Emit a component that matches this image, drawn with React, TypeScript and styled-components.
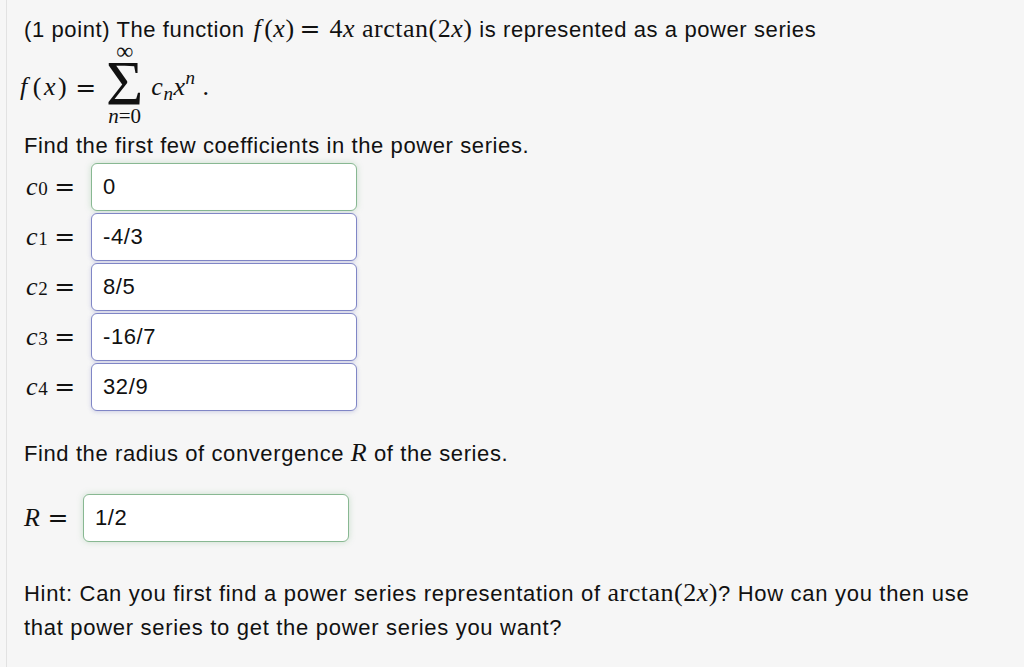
import React from "react";
import styled, { createGlobalStyle } from "styled-components";

const GlobalStyle = createGlobalStyle`
  html, body {
    margin: 0;
    padding: 0;
    background: #f6f6f6;
  }
`;

type Coefficient = {
  index: number;
  value: string;
  state: "correct" | "pending";
};

const coefficients: Coefficient[] = [
  { index: 0, value: "0", state: "correct" },
  { index: 1, value: "-4/3", state: "pending" },
  { index: 2, value: "8/5", state: "pending" },
  { index: 3, value: "-16/7", state: "pending" },
  { index: 4, value: "32/9", state: "pending" },
];

export default function App() {
  return (
    <>
      <GlobalStyle />
      <Page>
        <Line>
          (1 point) The function{" "}
          <MathSpan>
            <F>f</F>(<M>x</M>)<Eq>=</Eq>4<M>x</M> arctan(2<M>x</M>)
          </MathSpan>{" "}
          is represented as a power series
        </Line>

        <SeriesLine>
          <WideMath>
            <F>f</F>(<M>x</M>)
          </WideMath>
          <SeriesEq>=</SeriesEq>
          <Sum>
            <Limit>{"\u221E"}</Limit>
            <Sigma>{"\u03A3"}</Sigma>
            <Lower>
              <M>n</M>=0
            </Lower>
          </Sum>
          <MathSpan>
            <M>c</M>
            <Sub>
              <M>n</M>
            </Sub>
            <M>x</M>
            <Sup>
              <M>n</M>
            </Sup>
            <Dot>.</Dot>
          </MathSpan>
        </SeriesLine>

        <FindLine>Find the first few coefficients in the power series.</FindLine>

        <Answers>
          {coefficients.map((c) => (
            <AnswerRow key={c.index}>
              <Label>
                <M>c</M>
                <Sub>{c.index}</Sub>
                <LabelEq>=</LabelEq>
              </Label>
              <Field $state={c.state}>{c.value}</Field>
            </AnswerRow>
          ))}
        </Answers>

        <RadiusLine>
          Find the radius of convergence{" "}
          <MathSpan>
            <M>R</M>
          </MathSpan>{" "}
          of the series.
        </RadiusLine>

        <RadiusRow>
          <RLabel>
            <M>R</M>
            <REq>=</REq>
          </RLabel>
          <Field $state="correct">1/2</Field>
        </RadiusRow>

        <Hint>
          Hint: Can you first find a power series representation of{" "}
          <MathSpan>
            arctan(2<M>x</M>)
          </MathSpan>
          ? How can you then use
          <br />
          that power series to get the power series you want?
        </Hint>
      </Page>
    </>
  );
}

const Page = styled.div`
  min-height: 667px;
  box-sizing: border-box;
  margin-left: 6px;
  border-left: 1px solid #e2e2e2;
  padding: 15px 0 0 17px;
  font-family: "Liberation Sans", Arial, sans-serif;
  font-size: 22px;
  letter-spacing: 0.6px;
  color: #111;
`;

const Line = styled.div`
  line-height: 28px;
  white-space: nowrap;
`;

const MathSpan = styled.span`
  font-family: "Liberation Serif", "Times New Roman", serif;
  font-size: 26px;
  letter-spacing: 0.5px;
  white-space: nowrap;
`;

const WideMath = styled(MathSpan)`
  letter-spacing: 2.5px;
`;

const M = styled.i`
  font-family: "Liberation Serif", "Times New Roman", serif;
  font-style: italic;
`;

const F = styled(M)`
  margin: 0 3px 0 2px;
`;

const Eq = styled.span`
  font-family: "DejaVu Serif", "Liberation Serif", serif;
  font-size: 25px;
  letter-spacing: 0;
  margin: 0 9px 0 5px;
`;

const SeriesEq = styled(Eq)`
  margin: 0 8px 0 6px;
`;

const SeriesLine = styled.div`
  display: flex;
  align-items: center;
  height: 84px;
  margin-top: 1px;
  margin-left: -6px;
`;

const Sum = styled.span`
  align-self: flex-start;
  display: flex;
  flex-direction: column;
  align-items: center;
  font-family: "Liberation Serif", "Times New Roman", serif;
  letter-spacing: 0;
  margin: 0 8px 0 2px;
`;

const Limit = styled.span`
  display: block;
  font-size: 24px;
  line-height: 12px;
`;

const Sigma = styled.span`
  display: block;
  font-family: "Liberation Serif", "Times New Roman", serif;
  font-size: 64px;
  line-height: 48px;
  margin-top: 3px;
`;

const Lower = styled.span`
  display: block;
  font-size: 21px;
  line-height: 18px;
  margin-top: -1px;
`;

const Sub = styled.sub`
  font-family: "Liberation Serif", "Times New Roman", serif;
  font-size: 19px;
  vertical-align: -5px;
  line-height: 0;
`;

const Sup = styled.sup`
  font-size: 19px;
  vertical-align: 11px;
  line-height: 0;
`;

const Dot = styled.span`
  margin-left: 7px;
`;

const FindLine = styled(Line)`
  margin-top: 3px;
`;

const Answers = styled.div`
  display: flex;
  flex-direction: column;
  gap: 2px;
  margin-top: 3px;
`;

const AnswerRow = styled.div`
  display: flex;
  align-items: center;
`;

const Label = styled.span`
  width: 65px;
  flex: none;
  display: inline-flex;
  align-items: baseline;
  padding-left: 2px;
  font-family: "Liberation Serif", "Times New Roman", serif;
  font-size: 26px;
`;

const LabelEq = styled.span`
  font-family: "DejaVu Serif", "Liberation Serif", serif;
  font-size: 25px;
  margin-left: 6px;
`;

const Field = styled.div<{ $state: "correct" | "pending" }>`
  box-sizing: border-box;
  width: 266px;
  height: 48px;
  display: flex;
  align-items: center;
  padding-left: 11px;
  background: #fff;
  border-radius: 6px;
  font-size: 22px;
  color: #111;
  border: 1.5px solid
    ${(p) => (p.$state === "correct" ? "#88b892" : "#8086c6")};
  box-shadow: ${(p) =>
    p.$state === "correct"
      ? "0 0 6px rgba(120, 180, 130, 0.35)"
      : "0 1px 4px rgba(110, 115, 190, 0.3)"};
`;

const RadiusLine = styled(Line)`
  margin-top: 28px;
`;

const RadiusRow = styled.div`
  display: flex;
  align-items: center;
  margin-top: 26px;
`;

const RLabel = styled.span`
  width: 59px;
  flex: none;
  display: inline-flex;
  align-items: baseline;
  font-family: "Liberation Serif", "Times New Roman", serif;
  font-size: 26px;
`;

const REq = styled.span`
  font-family: "DejaVu Serif", "Liberation Serif", serif;
  font-size: 25px;
  margin-left: 7px;
`;

const Hint = styled.div`
  margin-top: 34px;
  line-height: 34px;
  letter-spacing: 0.7px;
  white-space: nowrap;
`;
